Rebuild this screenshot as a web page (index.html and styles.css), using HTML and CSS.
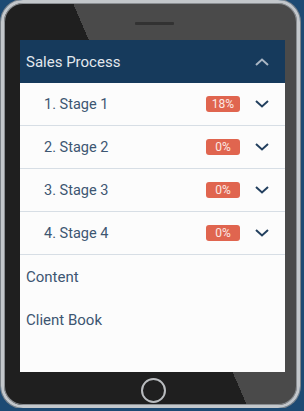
FILE: index.html
```html
<!DOCTYPE html>
<html lang="en">
<head>
    <meta charset="UTF-8">
    <meta name="viewport" content="width=device-width, initial-scale=1.0">
    <title>Sales Process</title>
    <link rel="stylesheet" href="styles.css">
</head>
<body>
    <div class="tablet">
        <div class="tablet-top">
            <span class="speaker"></span>
        </div>
        <main class="screen">
            <div class="menu-header">
                <span>Sales Process</span>
                <svg class="chevron" width="14" height="8" viewBox="0 0 14 8"><path d="M1 7L7 1.5L13 7" fill="none" stroke="#aab6c4" stroke-width="2"/></svg>
            </div>
            <ul class="stages">
                <li class="stage">
                    <span class="stage-name">1. Stage 1</span>
                    <span class="badge">18%</span>
                    <svg class="chevron" width="14" height="8" viewBox="0 0 14 8"><path d="M1 1L7 6.5L13 1" fill="none" stroke="#23405f" stroke-width="2"/></svg>
                </li>
                <li class="stage">
                    <span class="stage-name">2. Stage 2</span>
                    <span class="badge">0%</span>
                    <svg class="chevron" width="14" height="8" viewBox="0 0 14 8"><path d="M1 1L7 6.5L13 1" fill="none" stroke="#23405f" stroke-width="2"/></svg>
                </li>
                <li class="stage">
                    <span class="stage-name">3. Stage 3</span>
                    <span class="badge">0%</span>
                    <svg class="chevron" width="14" height="8" viewBox="0 0 14 8"><path d="M1 1L7 6.5L13 1" fill="none" stroke="#23405f" stroke-width="2"/></svg>
                </li>
                <li class="stage">
                    <span class="stage-name">4. Stage 4</span>
                    <span class="badge">0%</span>
                    <svg class="chevron" width="14" height="8" viewBox="0 0 14 8"><path d="M1 1L7 6.5L13 1" fill="none" stroke="#23405f" stroke-width="2"/></svg>
                </li>
            </ul>
            <a class="menu-link">Content</a>
            <a class="menu-link">Client Book</a>
        </main>
        <div class="tablet-bottom">
            <span class="home-button"></span>
        </div>
    </div>
</body>
</html>
```

FILE: styles.css
```css
/* Basic styling */
html, body {
    margin: 0;
    padding: 0;
    background-color: #1d4a73;
    font-family: Roboto, "Liberation Sans", sans-serif;
}
.tablet {
    box-sizing: border-box;
    width: 299px;
    height: 408px;
    margin-left: 1px;
    border: 3px solid #c3c7cb;
    border-radius: 22px;
    box-shadow: inset 0 0 0 1px #8a8e92, 0 0 0 1px #7d8389;
    background: linear-gradient(66.6deg, #1f1f1f 52%, #4a4a4a 52%);
    display: flex;
    flex-direction: column;
    padding: 0 12px 0 16px;
}
.tablet-top {
    height: 37px;
    display: flex;
    justify-content: center;
    align-items: center;
}
.speaker {
    width: 39px;
    height: 3px;
    margin: 4px 0 0 4px;
    background-color: #323232;
    border-radius: 1px;
}
.screen {
    height: 332px;
    background-color: #fcfcfc;
    display: flex;
    flex-direction: column;
}
.menu-header {
    height: 43px;
    flex-shrink: 0;
    background-color: #163a5c;
    color: #e3e8ee;
    font-size: 15px;
    display: flex;
    align-items: center;
    justify-content: space-between;
    padding: 0 16px 0 6px;
}
.stages {
    list-style: none;
    margin: 0;
    padding: 0;
}
.stage {
    height: 42px;
    border-bottom: 1px solid #d7dee5;
    display: flex;
    align-items: center;
    padding: 0 16px 0 24px;
    color: #3d5672;
    font-size: 14.5px;
}
.stage-name {
    flex: 1;
}
.badge {
    width: 34px;
    height: 16px;
    line-height: 16px;
    text-align: center;
    background-color: #e0654f;
    color: #fbe9e5;
    border-radius: 3px;
    font-size: 12px;
    margin-right: 15px;
}
.menu-link {
    height: 43px;
    display: flex;
    align-items: center;
    padding-left: 6px;
    color: #3d5672;
    font-size: 15px;
}
.tablet-bottom {
    flex: 1;
    display: flex;
    justify-content: center;
    align-items: center;
    padding-top: 3px;
}
.home-button {
    box-sizing: border-box;
    width: 25px;
    height: 25px;
    margin-left: 2px;
    border: 2px solid #b9bcbf;
    border-radius: 50%;
    background-color: #1f1f1f;
}
```
